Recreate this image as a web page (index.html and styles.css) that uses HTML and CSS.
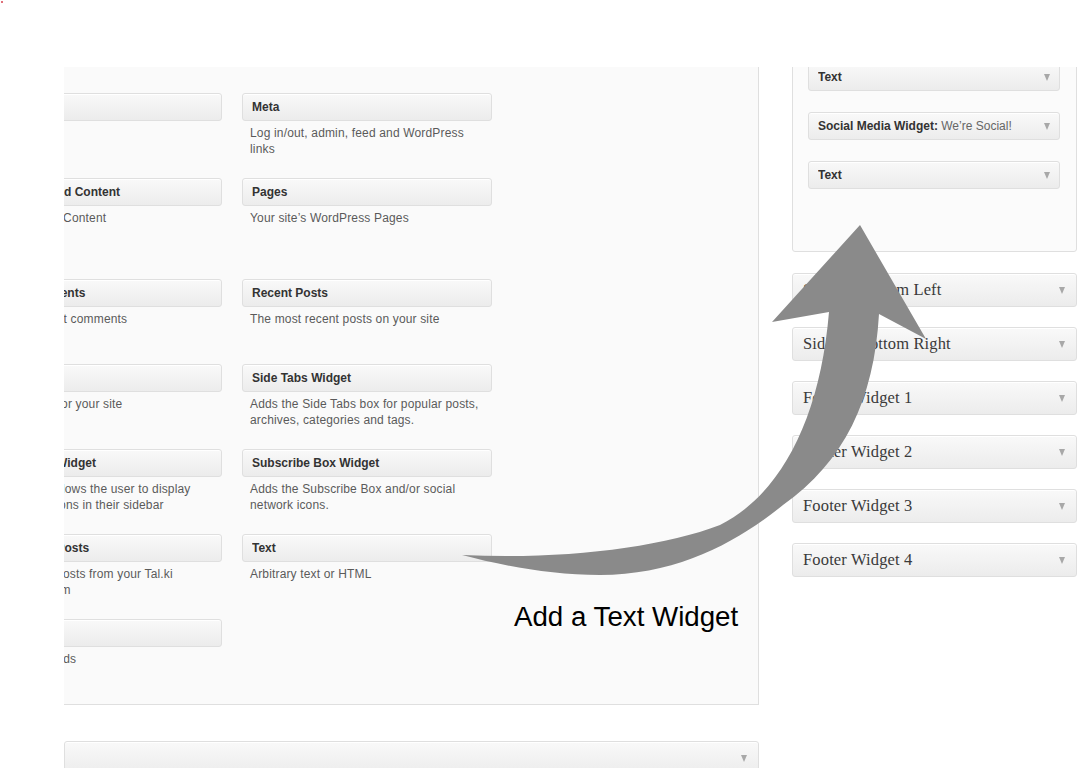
FILE: index.html
```html
<!DOCTYPE html>
<html>
<head>
<meta charset="utf-8">
<title>Widgets</title>
<link rel="stylesheet" href="styles.css">
</head>
<body>
<div class="page">
  <div class="topband"><span class="dot"></span></div>
  <div class="main">
    <div class="avail">
      <div class="panel">
        <div class="grid">
          <div class="widget"><div class="widget-top"><h4>Links</h4></div><div class="widget-desc">Your blogroll</div></div>
          <div class="widget"><div class="widget-top"><h4>Meta</h4></div><div class="widget-desc">Log in/out, admin, feed and WordPress links</div></div>

          <div class="widget"><div class="widget-top"><h4>Login Protected Content</h4></div><div class="widget-desc">Hide Protected Content<br>from guests<br>and visitors</div></div>
          <div class="widget"><div class="widget-top"><h4>Pages</h4></div><div class="widget-desc">Your site’s WordPress Pages</div></div>

          <div class="widget"><div class="widget-top"><h4>Recent Comments</h4></div><div class="widget-desc">The most recent comments</div></div>
          <div class="widget"><div class="widget-top"><h4>Recent Posts</h4></div><div class="widget-desc">The most recent posts on your site</div></div>

          <div class="widget"><div class="widget-top"><h4>Search</h4></div><div class="widget-desc">A search form for your site</div></div>
          <div class="widget"><div class="widget-top"><h4>Side Tabs Widget</h4></div><div class="widget-desc">Adds the Side Tabs box for popular posts, archives, categories and tags.</div></div>

          <div class="widget"><div class="widget-top"><h4>Social Media Widget</h4></div><div class="widget-desc">A widget that allows the user to display social media icons in their sidebar</div></div>
          <div class="widget"><div class="widget-top"><h4>Subscribe Box Widget</h4></div><div class="widget-desc">Adds the Subscribe Box and/or social network icons.</div></div>

          <div class="widget"><div class="widget-top"><h4>Tal.ki Recent Posts</h4></div><div class="widget-desc">Shows recent posts from your Tal.ki discussion forum</div></div>
          <div class="widget"><div class="widget-top"><h4>Text</h4></div><div class="widget-desc">Arbitrary text or HTML</div></div>

          <div class="widget"><div class="widget-top"><h4>Twitter</h4></div><div class="widget-desc">Your Twitter feeds</div></div>
        </div>
      </div>
      <div class="widget-top inactive"><h4></h4><span class="arr"></span></div>
    </div>

    <div class="sidebars">
      <div class="sidebar-open">
        <div class="widget-top sb"><h4>Text</h4><span class="arr"></span></div>
        <div class="widget-top sb"><h4>Social Media Widget: <span class="in-title">We’re Social!</span></h4><span class="arr"></span></div>
        <div class="widget-top sb"><h4>Text</h4><span class="arr"></span></div>
      </div>
      <div class="sidebar-list">
        <div class="sidebar-name"><h3>Sidebar Bottom Left</h3><span class="arr"></span></div>
        <div class="sidebar-name"><h3>Sidebar Bottom Right</h3><span class="arr"></span></div>
        <div class="sidebar-name"><h3>Footer Widget 1</h3><span class="arr"></span></div>
        <div class="sidebar-name"><h3>Footer Widget 2</h3><span class="arr"></span></div>
        <div class="sidebar-name"><h3>Footer Widget 3</h3><span class="arr"></span></div>
        <div class="sidebar-name"><h3>Footer Widget 4</h3><span class="arr"></span></div>
      </div>
    </div>
  </div>

  <svg class="callout-arrow" width="1092" height="768" viewBox="0 0 1092 768">
    <path d="M462,555 C560,560 660,548 720,525 C780,495 820,420 829,312 L772,322 L860,225 L926,339 L879,314 C874,400 844,462 783,505 C740,540 680,575 600,575 C550,575 500,565 462,555 Z" fill="#8a8a8a"/>
  </svg>
  <div class="callout-label">Add a Text Widget</div>
</div>
</body>
</html>
```

FILE: styles.css
```css
html, body {
  margin: 0;
  padding: 0;
  background: #fff;
}

body {
  font-family: "Liberation Sans", Arial, sans-serif;
  font-size: 12px;
  color: #333;
}

.page {
  position: relative;
  width: 1092px;
  height: 768px;
  overflow: hidden;
  background: #fff;
}

.topband {
  height: 66px;
  background: #fff;
}

.dot {
  display: block;
  width: 2px;
  height: 2px;
  margin: 1px 0 0 1px;
  background: #e0707a;
}

.main {
  display: flex;
  align-items: flex-start;
  height: 702px;
  overflow: hidden;
}

/* Available widgets */
.avail {
  width: 695px;
  margin-left: 64px;
  flex: none;
}

.panel {
  height: 638px;
  box-sizing: border-box;
  background: #fafafa;
  border-right: 1px solid #dfdfdf;
  border-bottom: 1px solid #dfdfdf;
  overflow: hidden;
  padding-top: 26px;
}

.grid {
  display: grid;
  grid-template-columns: 252px 250px;
  column-gap: 20px;
  margin-left: -94px;
  align-items: start;
}

.widget {
  margin-bottom: 21px;
}

.widget-top {
  height: 28px;
  box-sizing: border-box;
  border: 1px solid #dfdfdf;
  border-radius: 3px;
  background: linear-gradient(to top, #ececec, #f9f9f9);
  box-shadow: inset 0 1px 0 #fff;
  display: flex;
  align-items: center;
  padding: 0 10px 0 9px;
}

.widget-top h4 {
  margin: 0;
  flex: 1;
  font-size: 12px;
  font-weight: bold;
  color: #333;
  white-space: nowrap;
  overflow: hidden;
}

.in-title {
  font-weight: normal;
  color: #666;
}

.widget-desc {
  padding: 4px 8px 0 8px;
  line-height: 16px;
  min-height: 32px;
  color: #5a5a5a;
  letter-spacing: 0.16px;
}

.arr {
  flex: none;
  width: 0;
  height: 0;
  border-left: 3.5px solid transparent;
  border-right: 3.5px solid transparent;
  border-top: 7px solid #a8a8a8;
}

.inactive {
  height: 34px;
  margin-top: 36px;
  padding-right: 11px;
}

/* Sidebars */
.sidebars {
  width: 285px;
  margin-left: 33px;
  flex: none;
}

.sidebar-open {
  margin-top: -40px;
  background: #fbfbfb;
  border: 1px solid #dfdfdf;
  border-radius: 0 0 3px 3px;
  padding: 35px 16px 62px 15px;
  display: flex;
  flex-direction: column;
  gap: 21px;
}

.sb {
  padding-right: 9px;
}

.sidebar-list {
  margin-top: 21px;
  display: flex;
  flex-direction: column;
  gap: 20px;
}

.sidebar-name {
  height: 34px;
  box-sizing: border-box;
  border: 1px solid #dfdfdf;
  border-radius: 3px;
  background: linear-gradient(to top, #ececec, #f9f9f9);
  box-shadow: inset 0 1px 0 #fff;
  display: flex;
  align-items: center;
  padding: 0 11px 0 10px;
}

.sidebar-name h3 {
  margin: 0;
  flex: 1;
  font-family: "Liberation Serif", Georgia, serif;
  font-size: 16.5px;
  letter-spacing: 0.15px;
  font-weight: normal;
  color: #3a3a3a;
  white-space: nowrap;
}

/* Annotation overlay */
.callout-arrow {
  position: absolute;
  left: 0;
  top: 0;
  pointer-events: none;
}

.callout-label {
  position: absolute;
  left: 514px;
  top: 601px;
  font-family: "Liberation Sans", Arial, sans-serif;
  font-size: 27.7px;
  color: #000;
  white-space: nowrap;
}
```
